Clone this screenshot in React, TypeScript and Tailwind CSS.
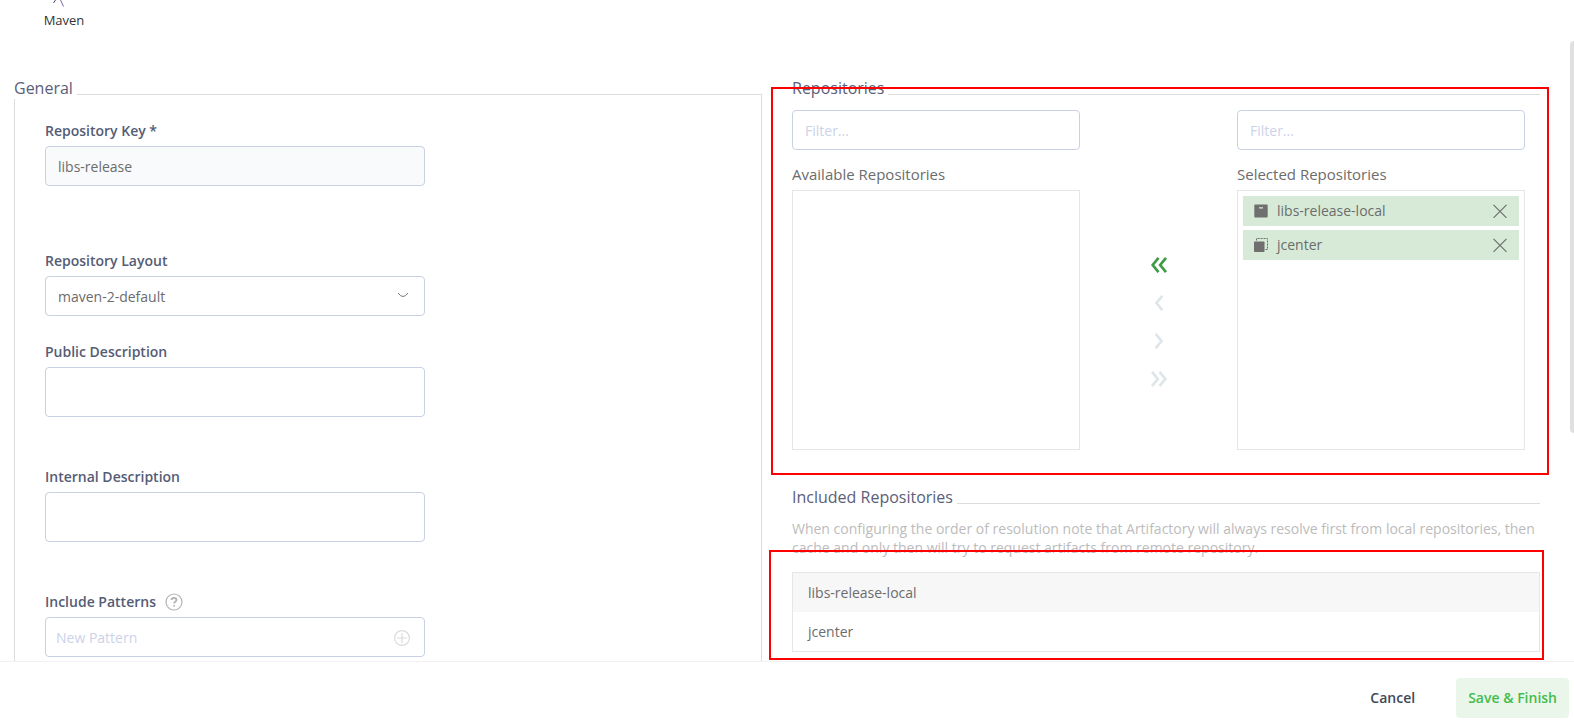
import React from "react";

const BOX = "rounded border border-[#c8d0e4] bg-white text-sm text-[#6c6c6c] outline-none placeholder:text-[#cbd3e8]";

function SectionTitle({ children, closed = false }: { children: React.ReactNode; closed?: boolean }) {
  return (
    <div className="flex gap-1">
      <h2 className="text-base leading-[22px] text-[#5a6079]">{children}</h2>
      <span className={closed ? "h-[5px] flex-1 self-end border-t border-r border-[#dcdcdc]" : "h-[5px] flex-1 self-end border-t border-[#dcdcdc]"} />
    </div>
  );
}

function FieldLabel({ htmlFor, children }: { htmlFor: string; children: React.ReactNode }) {
  return (
    <label htmlFor={htmlFor} className="text-sm font-semibold leading-5 text-[#555c75]">
      {children}
    </label>
  );
}

function Chevron({ double = false, flip = false }: { double?: boolean; flip?: boolean }) {
  return (
    <svg width="18" height="18" viewBox="0 0 18 18" fill="none" stroke="currentColor" strokeWidth="2.7" className={flip ? "rotate-180" : ""}>
      {double ? <path d="M8.500 1.800 2.700 9l5.800 7.200M16 1.800 10.200 9l5.800 7.200" /> : <path d="M12.300 1.800 6.500 9l5.800 7.200" />}
    </svg>
  );
}

function LocalIcon() {
  return (
    <svg width="14" height="14" viewBox="0 0 14 14" fill="#6f6f6f">
      <path fillRule="evenodd" d="M1 .5h12a.7.7 0 0 1 .7.7v11.6a.7.7 0 0 1-.7.7H1a.7.7 0 0 1-.7-.7V1.2A.7.7 0 0 1 1 .5ZM5 3.200v1.300h4V3.200Z" />
    </svg>
  );
}

function RemoteIcon() {
  return (
    <svg width="14" height="14" viewBox="0 0 14 14">
      <rect x="0" y="3.500" width="10.500" height="10.500" rx="0.700" fill="#6f6f6f" />
      <path d="M2.500 2.500v-2h11v11h-2" fill="none" stroke="#6f6f6f" strokeDasharray="2 1" />
    </svg>
  );
}

function Repositories() {
  return (
    <div className="mt-[11px] flex justify-between pr-[15px]">
      <div className="w-72">
        <input aria-label="Filter available repositories" placeholder="Filter..." className={`${BOX} block h-10 w-full px-3`} />
        <h3 className="mt-[14px] mb-[6px] text-[15px] leading-5 text-[#6c6c6c]">Available Repositories</h3>
        <ul className="h-[260px] border border-[#e6e6e6]" />
      </div>
      <div className="flex flex-col gap-5 pt-[146px] text-[#dfe5e8]">
        <button aria-label="Remove all" className="text-[#3f9c46]"><Chevron double /></button>
        <button aria-label="Remove" disabled><Chevron /></button>
        <button aria-label="Add" disabled><Chevron flip /></button>
        <button aria-label="Add all" disabled><Chevron double flip /></button>
      </div>
      <div className="w-72">
        <input aria-label="Filter selected repositories" placeholder="Filter..." className={`${BOX} block h-10 w-full px-3`} />
        <h3 className="mt-[14px] mb-[6px] text-[15px] leading-5 text-[#6c6c6c]">Selected Repositories</h3>
        <ul className="flex h-[260px] flex-col gap-1 border border-[#e6e6e6] p-[5px]">
          {["libs-release-local", "jcenter"].map((name, i) => (
            <li key={name} className="flex h-[30px] items-center bg-[#d7ead7] pr-3 pl-[11px] text-sm text-[#6c6c6c]">
              {i === 0 ? <LocalIcon /> : <RemoteIcon />}
              <span className="ml-[9px] flex-1">{name}</span>
              <button aria-label={`Remove ${name}`}>
                <svg width="14" height="14" viewBox="0 0 14 14" stroke="#6f6f6f" strokeWidth="1.200">
                  <path d="m.5.8 13 13M13.500.8l-13 13" />
                </svg>
              </button>
            </li>
          ))}
        </ul>
      </div>
    </div>
  );
}

export default function App() {
  return (
    <div className="flex h-screen flex-col bg-white font-['Open_Sans',sans-serif]">
      <main className="relative flex-1 overflow-hidden">
        <div className="flex h-[77px] w-32 flex-col items-center">
          <svg width="14" height="10" viewBox="0 0 14 10" fill="none" className="-ml-3">
            <path d="M2.500 3 4.500 0" stroke="#4a4670" />
            <path d="M9.500 0 12.500 6.500" stroke="#7d67a0" />
          </svg>
          <span className="text-[13px] leading-5 text-[#333]">Maven</span>
        </div>

        <div className="grid grid-cols-2 gap-[30px] pr-[34px] pl-[14px]">
          <section>
            <SectionTitle closed>General</SectionTitle>
            <div className="border-x border-[#dcdcdc] px-[30px] pt-[22px] pb-10">
              <div className="flex w-[380px] flex-col">
                <div className="mb-[65px] flex flex-col gap-[5px]">
                  <FieldLabel htmlFor="key">Repository Key *</FieldLabel>
                  <input id="key" readOnly value="libs-release" className="h-10 rounded border border-[#c8d0e4] bg-[#f8fafc] px-3 text-sm text-[#6c6c6c] outline-none" />
                </div>
                <div className="mb-[26px] flex flex-col gap-[5px]">
                  <FieldLabel htmlFor="layout">Repository Layout</FieldLabel>
                  <div className="relative">
                    <select id="layout" className={`${BOX} block h-10 w-full appearance-none px-3 pt-0.5`}>
                      <option>maven-2-default</option>
                    </select>
                    <svg width="12" height="6" viewBox="0 0 12 6" fill="none" stroke="#777" className="pointer-events-none absolute top-4 right-4">
                      <path d="M1 1q2.500 3.500 5 3.500T11 1" />
                    </svg>
                  </div>
                </div>
                <div className="mb-[50px] flex flex-col gap-[5px]">
                  <FieldLabel htmlFor="public">Public Description</FieldLabel>
                  <textarea id="public" className={`${BOX} h-[50px] resize-none px-3 py-2`} />
                </div>
                <div className="mb-[50px] flex flex-col gap-[5px]">
                  <FieldLabel htmlFor="internal">Internal Description</FieldLabel>
                  <textarea id="internal" className={`${BOX} h-[50px] resize-none px-3 py-2`} />
                </div>
                <div className="flex flex-col gap-[5px]">
                  <div className="flex h-5 items-center gap-[9px]">
                    <FieldLabel htmlFor="include">Include Patterns</FieldLabel>
                    <svg width="18" height="18" viewBox="0 0 18 18" fill="none" stroke="#b3b3b3">
                      <circle cx="9" cy="9" r="8" strokeWidth="1.200" />
                      <path d="M6.500 7Q6.600 5 9 5t2.500 2c0 1.500-2.400 1.600-2.400 3.500M9.100 12v1.600" strokeWidth="1.800" />
                    </svg>
                  </div>
                  <div className="flex h-10 items-center rounded border border-[#c8d0e4] pt-0.5 pr-[14px] pl-[10px]">
                    <input id="include" placeholder="New Pattern" className="min-w-0 flex-1 text-sm outline-none placeholder:text-[#cbd3e8]" />
                    <button aria-label="Add pattern">
                      <svg width="16" height="16" viewBox="0 0 16 16" fill="none" stroke="#dcdcdc" strokeWidth="1.200">
                        <circle cx="8" cy="8" r="7.400" />
                        <path d="M8 3v10M3 8h10" />
                      </svg>
                    </button>
                  </div>
                </div>
              </div>
            </div>
          </section>

          <section className="relative">
            <SectionTitle>Repositories</SectionTitle>
            <Repositories />
            <div className="mt-9">
              <SectionTitle>Included Repositories</SectionTitle>
            </div>
            <p className="mt-[11px] text-sm leading-[19px] text-[#bcbcbc]">
              When configuring the order of resolution note that Artifactory will always resolve first from local repositories, then cache and only then will try to request artifacts from remote repository.
            </p>
            <ul className="mt-[15px] border border-[#e6e6e6] text-sm text-[#6c6c6c]">
              <li className="bg-[#f7f7f7] px-[15px] leading-[39px]">libs-release-local</li>
              <li className="px-[15px] leading-[39px]">jcenter</li>
            </ul>
            <div className="pointer-events-none absolute top-[10px] -right-[9px] -left-[21px] h-[388px] border-2 border-[#f00]" />
            <div className="pointer-events-none absolute top-[473px] -right-1 -left-[23px] h-[110px] border-2 border-[#f00]" />
          </section>
        </div>
        <div className="absolute top-[41px] right-0 h-[392px] w-1 rounded-l bg-[#e0e0e0]" />
      </main>

      <footer className="flex h-16 items-center justify-end gap-[29px] border-t border-[#f0f0f5] pt-4 pr-[5px] pb-[7px] text-sm font-semibold">
        <button className="h-10 px-3 text-[#414857]">Cancel</button>
        <button className="h-10 rounded bg-[#ebf6eb] px-3 text-[#43bd4c]">Save &amp; Finish</button>
      </footer>
    </div>
  );
}
